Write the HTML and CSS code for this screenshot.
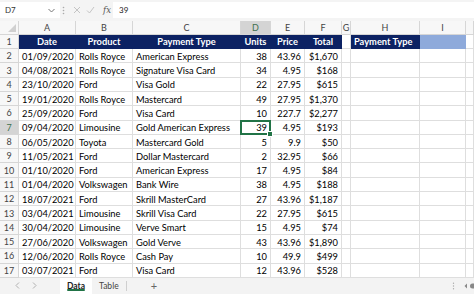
FILE: index.html
```html
<!DOCTYPE html>
<html>
<head>
<meta charset="utf-8">
<link rel="stylesheet" href="styles.css">
</head>
<body>
<div class="app">
  <div class="fbar">
    <div class="namebox"><span class="ref">D7</span>
      <svg class="chev" width="7" height="5" viewBox="0 0 7 5"><path d="M0.5 1 L3.5 4 L6.5 1" fill="none" stroke="#777" stroke-width="1"/></svg>
    </div>
    <svg class="vdots" width="3" height="9" viewBox="0 0 3 9"><circle cx="1.5" cy="1.5" r="0.8" fill="#aaa"/><circle cx="1.5" cy="4.5" r="0.8" fill="#aaa"/><circle cx="1.5" cy="7.5" r="0.8" fill="#aaa"/></svg>
    <div class="ficons">
      <svg width="8" height="8" viewBox="0 0 8 8"><path d="M1 1 L7 7 M7 1 L1 7" stroke="#c4c4c4" stroke-width="1" fill="none"/></svg>
      <svg width="9" height="8" viewBox="0 0 9 8"><path d="M1 4.5 L3.5 7 L8 1" stroke="#c4c4c4" stroke-width="1" fill="none"/></svg>
      <span class="fx">fx</span>
    </div>
    <div class="finput">39</div>
  </div>

  <div class="sheet">
    <div class="c corner"><span class="tri"></span></div>
    <div class="c h">A</div><div class="c h">B</div><div class="c h">C</div><div class="c h hs">D</div><div class="c h">E</div><div class="c h">F</div><div class="c h">G</div><div class="c h">H</div><div class="c h">I</div><div class="c h"></div>

    <div class="c r">1</div><div class="c dk ctr">Date</div><div class="c dk ctr">Product</div><div class="c dk ctr">Payment Type</div><div class="c dk ctr">Units</div><div class="c dk ctr">Price</div><div class="c dk ctr">Total</div><div class="c"></div><div class="c dk">Payment Type</div><div class="c lb"></div><div class="c"></div>

    <div class="c r">2</div><div class="c t">01/09/2020</div><div class="c t">Rolls Royce</div><div class="c t">American Express</div><div class="c n">38</div><div class="c n">43.96</div><div class="c n">$1,670</div><div class="c"></div><div class="c"></div><div class="c"></div><div class="c"></div>
    <div class="c r">3</div><div class="c t">04/08/2021</div><div class="c t">Rolls Royce</div><div class="c t">Signature Visa Card</div><div class="c n">34</div><div class="c n">4.95</div><div class="c n">$168</div><div class="c"></div><div class="c"></div><div class="c"></div><div class="c"></div>
    <div class="c r">4</div><div class="c t">23/10/2020</div><div class="c t">Ford</div><div class="c t">Visa Gold</div><div class="c n">22</div><div class="c n">27.95</div><div class="c n">$615</div><div class="c"></div><div class="c"></div><div class="c"></div><div class="c"></div>
    <div class="c r">5</div><div class="c t">19/01/2020</div><div class="c t">Rolls Royce</div><div class="c t">Mastercard</div><div class="c n">49</div><div class="c n">27.95</div><div class="c n">$1,370</div><div class="c"></div><div class="c"></div><div class="c"></div><div class="c"></div>
    <div class="c r">6</div><div class="c t">25/09/2020</div><div class="c t">Ford</div><div class="c t">Visa Card</div><div class="c n">10</div><div class="c n">227.7</div><div class="c n">$2,277</div><div class="c"></div><div class="c"></div><div class="c"></div><div class="c"></div>
    <div class="c r rs">7</div><div class="c t">09/04/2020</div><div class="c t">Limousine</div><div class="c t">Gold American Express</div><div class="c n sel">39</div><div class="c n">4.95</div><div class="c n">$193</div><div class="c"></div><div class="c"></div><div class="c"></div><div class="c"></div>
    <div class="c r">8</div><div class="c t">06/05/2020</div><div class="c t">Toyota</div><div class="c t">Mastercard Gold</div><div class="c n">5</div><div class="c n">9.9</div><div class="c n">$50</div><div class="c"></div><div class="c"></div><div class="c"></div><div class="c"></div>
    <div class="c r">9</div><div class="c t">11/05/2021</div><div class="c t">Ford</div><div class="c t">Dollar Mastercard</div><div class="c n">2</div><div class="c n">32.95</div><div class="c n">$66</div><div class="c"></div><div class="c"></div><div class="c"></div><div class="c"></div>
    <div class="c r">10</div><div class="c t">01/10/2020</div><div class="c t">Ford</div><div class="c t">American Express</div><div class="c n">17</div><div class="c n">4.95</div><div class="c n">$84</div><div class="c"></div><div class="c"></div><div class="c"></div><div class="c"></div>
    <div class="c r">11</div><div class="c t">01/04/2020</div><div class="c t">Volkswagen</div><div class="c t">Bank Wire</div><div class="c n">38</div><div class="c n">4.95</div><div class="c n">$188</div><div class="c"></div><div class="c"></div><div class="c"></div><div class="c"></div>
    <div class="c r">12</div><div class="c t">18/07/2021</div><div class="c t">Ford</div><div class="c t">Skrill MasterCard</div><div class="c n">27</div><div class="c n">43.96</div><div class="c n">$1,187</div><div class="c"></div><div class="c"></div><div class="c"></div><div class="c"></div>
    <div class="c r">13</div><div class="c t">03/04/2021</div><div class="c t">Limousine</div><div class="c t">Skrill Visa Card</div><div class="c n">22</div><div class="c n">27.95</div><div class="c n">$615</div><div class="c"></div><div class="c"></div><div class="c"></div><div class="c"></div>
    <div class="c r">14</div><div class="c t">30/04/2020</div><div class="c t">Limousine</div><div class="c t">Verve Smart</div><div class="c n">15</div><div class="c n">4.95</div><div class="c n">$74</div><div class="c"></div><div class="c"></div><div class="c"></div><div class="c"></div>
    <div class="c r">15</div><div class="c t">27/06/2020</div><div class="c t">Volkswagen</div><div class="c t">Gold Verve</div><div class="c n">43</div><div class="c n">43.96</div><div class="c n">$1,890</div><div class="c"></div><div class="c"></div><div class="c"></div><div class="c"></div>
    <div class="c r">16</div><div class="c t">12/06/2020</div><div class="c t">Rolls Royce</div><div class="c t">Cash Pay</div><div class="c n">10</div><div class="c n">49.9</div><div class="c n">$499</div><div class="c"></div><div class="c"></div><div class="c"></div><div class="c"></div>
    <div class="c r">17</div><div class="c t">03/07/2021</div><div class="c t">Ford</div><div class="c t">Visa Card</div><div class="c n">12</div><div class="c n">43.96</div><div class="c n">$528</div><div class="c"></div><div class="c"></div><div class="c"></div><div class="c"></div>
  </div>

  <div class="tabs">
    <div class="nav">
      <svg width="5" height="7" viewBox="0 0 5 7"><path d="M4 0.5 L1 3.5 L4 6.5" fill="none" stroke="#b0b0b0" stroke-width="1"/></svg>
      <svg width="5" height="7" viewBox="0 0 5 7"><path d="M1 0.5 L4 3.5 L1 6.5" fill="none" stroke="#b0b0b0" stroke-width="1"/></svg>
    </div>
    <div class="tab active">Data</div>
    <div class="tab">Table</div>
    <div class="tsep"></div>
    <div class="plus">+</div>
    <div class="spacer"></div>
    <svg class="tdots" width="3" height="8" viewBox="0 0 3 8"><circle cx="1.5" cy="1.2" r="0.7" fill="#aaa"/><circle cx="1.5" cy="4" r="0.7" fill="#aaa"/><circle cx="1.5" cy="6.8" r="0.7" fill="#aaa"/></svg>
    <svg class="scroll" width="12" height="6" viewBox="0 0 12 6"><path d="M3 0.5 L0.5 3 L3 5.5 Z" fill="#888"/><rect x="6" y="0.5" width="6" height="5" rx="2.5" fill="#888"/></svg>
  </div>
</div>
</body>
</html>
```
FILE: styles.css
```css
html, body {
  margin: 0;
  padding: 0;
  background: #ffffff;
}
body {
  font-family: Lato, "Liberation Sans", sans-serif;
  color: #000;
}
.app {
  width: 474px;
  height: 294px;
  overflow: hidden;
  display: flex;
  flex-direction: column;
}

/* formula bar */
.fbar {
  height: 20.5px;
  flex: none;
  box-sizing: border-box;
  padding: 2px 0 2.5px 0;
  background: #f4f4f4;
  display: flex;
  align-items: stretch;
}
.namebox {
  width: 60px;
  background: #fff;
  display: flex;
  align-items: center;
  box-sizing: border-box;
  padding-left: 5px;
  padding-right: 5px;
  justify-content: space-between;
}
.ref {
  font-size: 8px;
  color: #333;
}
.vdots {
  align-self: center;
  margin-left: 2px;
  margin-right: 8px;
}
.ficons {
  display: flex;
  align-items: center;
  gap: 5px;
  width: 40px;
}
.fx {
  font-family: "DejaVu Serif", serif;
  font-style: italic;
  font-size: 8.5px;
  color: #555;
  margin-left: 3px;
}
.finput {
  flex: 1;
  background: #fff;
  display: flex;
  align-items: center;
  padding-left: 6px;
  font-size: 8px;
  color: #222;
}

/* grid */
.sheet {
  flex: none;
  display: grid;
  grid-template-columns: 19px 57px 57px 108px 30px 34px 37px 9px 69px 46px 1fr;
  grid-auto-rows: 14.3px;
  font-size: 9.3px;
}
.c {
  box-sizing: border-box;
  border-right: 1px solid #dedede;
  border-bottom: 1px solid #dedede;
  display: flex;
  align-items: center;
  padding-top: 1px;
  white-space: nowrap;
  overflow: hidden;
  position: relative;
}
.h, .r, .corner {
  background: #f7f7f7;
  color: #444;
  justify-content: center;
  font-size: 9px;
  border-color: #d6d6d6;
  padding-top: 0;
}
.tri {
  position: absolute;
  right: 2px;
  bottom: 2px;
  width: 0;
  height: 0;
  border-left: 8px solid transparent;
  border-bottom: 8px solid #d0d0d0;
}
.hs, .rs {
  background: #d4d4d4;
  color: #3d7050;
}
.t {
  padding-left: 3px;
}
.n {
  justify-content: flex-end;
  padding-right: 3px;
}
.ctr {
  justify-content: center;
}
.dk {
  background: #0c2263;
  color: #fff;
  font-weight: 700;
  border-color: #0c2263;
  padding-left: 3px;
}
.dk.ctr {
  padding-left: 0;
}
.lb {
  background: #8eaadb;
  border-color: #8eaadb;
}
.sel {
  overflow: visible;
  z-index: 2;
}
.sel::before {
  content: "";
  position: absolute;
  left: -1px;
  top: -1px;
  right: -1px;
  bottom: -1px;
  border: 2px solid #217346;
}
.sel::after {
  content: "";
  position: absolute;
  right: -3px;
  bottom: -3px;
  width: 4px;
  height: 4px;
  background: #217346;
  border: 1px solid #fff;
}

/* sheet tabs */
.tabs {
  flex: 1;
  background: #f3f3f3;
  display: flex;
  align-items: center;
  font-size: 8.5px;
  color: #444;
}
.nav {
  display: flex;
  gap: 12px;
  padding-left: 15px;
  width: 60px;
  box-sizing: border-box;
}
.tab {
  padding: 0 7px;
  height: 100%;
  display: flex;
  align-items: center;
  box-sizing: border-box;
}
.tab.active {
  background: #fff;
  color: #222;
  font-weight: 700;
  position: relative;
}
.tab.active::after {
  content: "";
  position: absolute;
  left: 7px;
  right: 7px;
  bottom: 3px;
  height: 2px;
  background: #217346;
  border-radius: 1px;
}
.tsep {
  width: 1px;
  height: 10px;
  background: #cfcfcf;
}
.plus {
  margin-left: 24px;
  font-size: 11px;
  color: #666;
}
.spacer {
  flex: 1;
}
.tdots {
  margin-right: 9px;
}
.scroll {
  margin-right: -2px;
}
```
